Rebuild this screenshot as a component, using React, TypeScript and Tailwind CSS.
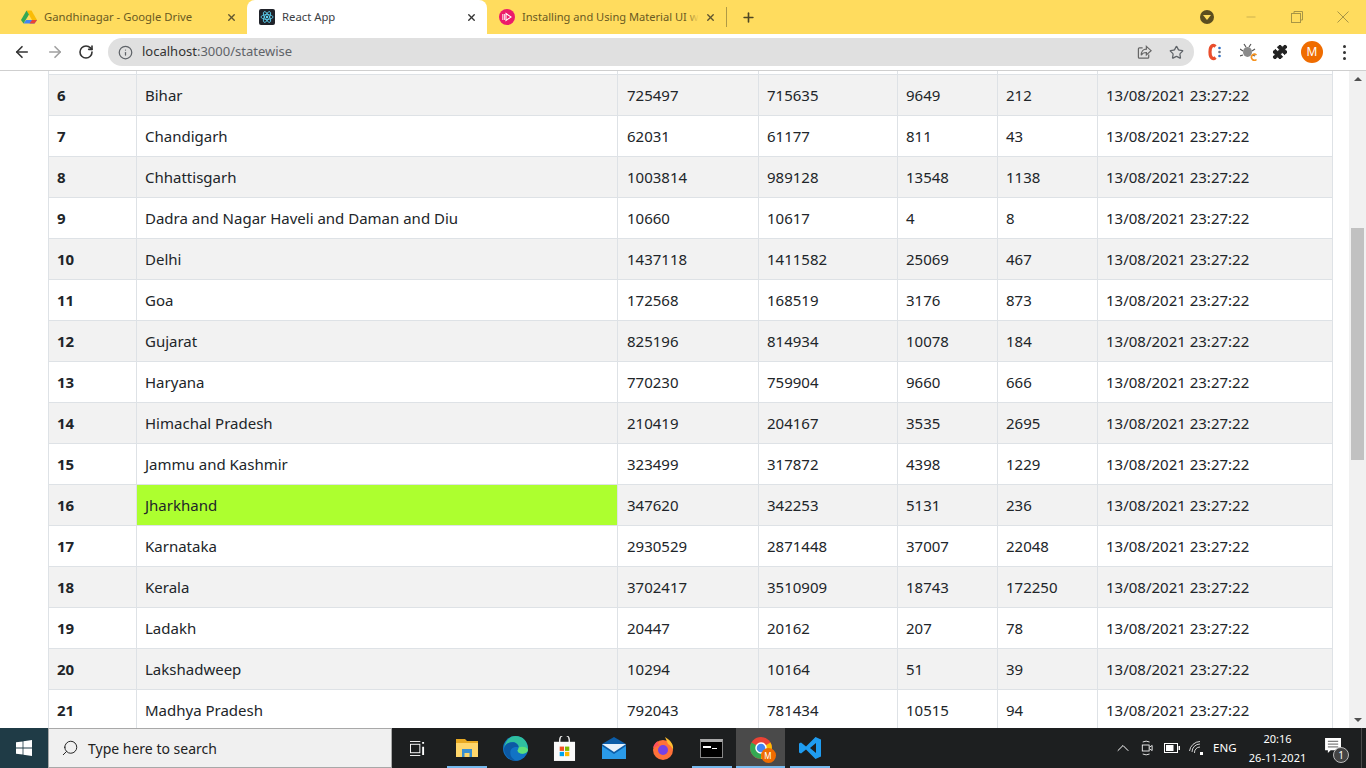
import { ArrowLeft, ArrowRight, RotateCw, Info, Star, Puzzle, Plus, X, Minus, Search, ChevronUp } from 'lucide-react';

const rows = [
  [6, 'Bihar', '725497', '715635', '9649', '212'],
  [7, 'Chandigarh', '62031', '61177', '811', '43'],
  [8, 'Chhattisgarh', '1003814', '989128', '13548', '1138'],
  [9, 'Dadra and Nagar Haveli and Daman and Diu', '10660', '10617', '4', '8'],
  [10, 'Delhi', '1437118', '1411582', '25069', '467'],
  [11, 'Goa', '172568', '168519', '3176', '873'],
  [12, 'Gujarat', '825196', '814934', '10078', '184'],
  [13, 'Haryana', '770230', '759904', '9660', '666'],
  [14, 'Himachal Pradesh', '210419', '204167', '3535', '2695'],
  [15, 'Jammu and Kashmir', '323499', '317872', '4398', '1229'],
  [16, 'Jharkhand', '347620', '342253', '5131', '236'],
  [17, 'Karnataka', '2930529', '2871448', '37007', '22048'],
  [18, 'Kerala', '3702417', '3510909', '18743', '172250'],
  [19, 'Ladakh', '20447', '20162', '207', '78'],
  [20, 'Lakshadweep', '10294', '10164', '51', '39'],
  [21, 'Madhya Pradesh', '792043', '781434', '10515', '94'],
];

const cell = 'border border-[#dee2e6] pr-1 pt-[2px] align-middle';

function Tab({ active, icon, title, width, fade }: { active?: boolean; icon: React.ReactNode; title: string; width: string; fade?: boolean }) {
  return (
    <div className={`${width} h-[34px] flex items-center shrink-0 pl-[12px] ${active ? 'bg-white rounded-t-lg' : ''}`}>
      <div className="w-4 h-4 shrink-0">{icon}</div>
      <div className="relative ml-[7px] flex-1 min-w-0 overflow-hidden">
        <div className={`${fade ? 'text-[11.1px]' : 'text-[11.3px]'} whitespace-nowrap ${active ? 'text-[#3c4043]' : 'text-[#6a5a22]'}`}>{title}</div>
        {fade && <div className="absolute right-0 top-0 bottom-0 w-[14px] bg-gradient-to-r from-transparent to-[#ffdc5e]" />}
      </div>
      <X className={`w-[11px] h-[11px] ml-[6px] mr-[10px] shrink-0 ${active ? 'text-[#333]' : 'text-[#5f5530]'}`} strokeWidth={3} />
    </div>
  );
}

function DriveIcon() {
  return (
    <svg viewBox="0 0 16 16" className="w-4 h-4">
      <path d="M5.500 1.500h5L16 11h-5z" fill="#fbbc04" />
      <path d="M5.500 1.500 0 11l2.500 3.500L8 5.500z" fill="#34a853" />
      <path d="M5 11h11l-2.500 3.500h-11z" fill="#4285f4" />
      <path d="M11 11h5l-2.500 3.500h-5z" fill="#ea4335" />
    </svg>
  );
}

function ReactIcon() {
  return (
    <svg viewBox="0 0 16 16" className="w-4 h-4">
      <rect width="16" height="16" rx="2" fill="#20232a" />
      <g fill="none" stroke="#61dafb" strokeWidth="0.8">
        <ellipse cx="8" cy="8" rx="6" ry="2.400" />
        <ellipse cx="8" cy="8" rx="6" ry="2.400" transform="rotate(60 8 8)" />
        <ellipse cx="8" cy="8" rx="6" ry="2.400" transform="rotate(120 8 8)" />
      </g>
      <circle cx="8" cy="8" r="1.200" fill="#61dafb" />
    </svg>
  );
}

function PlayIcon() {
  return (
    <svg viewBox="0 0 16 16" className="w-4 h-4">
      <circle cx="8" cy="8" r="8" fill="#ec1a6b" />
      <path d="M7 4.500 12 8l-5 3.500z" fill="none" stroke="#fff" strokeWidth="1.100" />
      <path d="M3.800 5v6M5.400 5v6" stroke="#fff" strokeWidth="0.9" />
    </svg>
  );
}

function ColorZilla() {
  return (
    <svg viewBox="0 0 18 18" className="w-[18px] h-[18px]">
      <path d="M9.500 3.500C7.500 1.500 4 2 4 9s3.500 7.500 5.500 5.500" fill="none" stroke="#ea4e2d" strokeWidth="3.200" />
      <circle cx="13.500" cy="5" r="1.300" fill="#2f6fc4" />
      <circle cx="13.500" cy="9" r="1.300" fill="#6a7380" />
      <circle cx="13.500" cy="13" r="1.300" fill="#2f6fc4" />
    </svg>
  );
}

function BugIcon() {
  return (
    <svg viewBox="0 0 18 18" className="w-[18px] h-[18px]">
      <ellipse cx="7.500" cy="9" rx="4.500" ry="5" fill="#8a8a8a" />
      <path d="M4 1l2 3M11 1L9 4M0 6l3 2M15 6l-3 2M0 13l3-1M15 13l-3-1" stroke="#555" strokeWidth="1.200" />
      <path d="M16.500 12a3 3 0 1 0 0 4.500" fill="none" stroke="#f6921e" strokeWidth="1.600" />
    </svg>
  );
}

function WindowsLogo() {
  return (
    <svg viewBox="0 0 16 16" className="w-4 h-4" fill="#fff">
      <path d="M0 2.300 6.600 1.400v6.200H0zM7.400 1.300 16 0v7.600H7.400zM0 8.400h6.600v6.200L0 13.700zM7.400 8.400H16V16l-8.600-1.300z" />
    </svg>
  );
}

function TaskApp({ children, running, active }: { children: React.ReactNode; running?: boolean; active?: boolean }) {
  return (
    <div className={`relative w-[49px] h-10 flex items-center justify-center shrink-0 ${active ? 'bg-[#4a4a4a]' : ''}`}>
      {children}
      {running && <div className={`absolute bottom-0 h-[2px] bg-[#76b9ed] ${active ? 'left-0 right-0' : 'left-[5px] right-[4px]'}`} />}
    </div>
  );
}

export default function App() {
  return (
    <div className="w-[1366px] h-[768px] flex flex-col overflow-hidden bg-white font-['Noto_Sans',sans-serif]">
      {/* tab strip */}
      <div className="h-[34px] bg-[#ffdc5e] flex items-center shrink-0">
        <div className="w-[9px] shrink-0" />
        <Tab icon={<DriveIcon />} title="Gandhinagar - Google Drive" width="w-[238px]" />
        <Tab active icon={<ReactIcon />} title="React App" width="w-[240px]" />
        <Tab icon={<PlayIcon />} title="Installing and Using Material UI w" width="w-[239px]" fade />
        <div className="w-px h-5 bg-[#b09a45] shrink-0" />
        <Plus className="ml-[14px] w-[15px] h-[15px] text-[#4f4724]" strokeWidth={2.600} />
        <div className="flex-1" />
        <div className="w-[14px] h-[14px] rounded-full bg-[#5b4d1f] flex items-center justify-center mr-[30px]">
          <div className="w-0 h-0 border-x-[4px] border-x-transparent border-t-[5px] border-t-[#ffdc5e]" />
        </div>
        <Minus className="w-[14px] h-[14px] text-[#a89545] mr-[33px]" strokeWidth={1} />
        <svg viewBox="0 0 12 12" className="w-[12px] h-[12px] mr-[34px]" fill="none" stroke="#a89545">
          <rect x="0.500" y="2.500" width="9" height="9" />
          <path d="M3 2.500V.5h8.500V9H9.500" />
        </svg>
        <svg viewBox="0 0 12 12" className="w-[12px] h-[12px] mr-[17px]" fill="none" stroke="#a89545">
          <path d="M.5.5l11 11M11.500.5l-11 11" />
        </svg>
      </div>

      {/* toolbar */}
      <div className="h-[37px] bg-white border-b border-[#cfcfcf] flex items-start shrink-0 box-border">
        <div className="flex items-center h-[36px]">
          <ArrowLeft className="ml-[13px] w-[18px] h-[18px] text-[#333]" strokeWidth={2.200} />
          <ArrowRight className="ml-[15px] w-[18px] h-[18px] text-[#a0a0a0]" strokeWidth={2.200} />
          <RotateCw className="ml-[14px] w-[16px] h-[16px] text-[#333]" strokeWidth={2.400} />
        </div>
        <div className="ml-[14px] mt-[4px] w-[1086px] h-[28px] rounded-full bg-[#e0e0e0] flex items-center">
          <Info className="ml-[10px] w-[15px] h-[15px] text-[#5f6368]" strokeWidth={2} />
          <span className="ml-[9px] text-[13px] text-[#333]">localhost<span className="text-[#5f6368]">:3000/statewise</span></span>
          <div className="flex-1" />
          <svg viewBox="0 0 16 16" className="w-[15px] h-[15px]" fill="none" stroke="#666" strokeWidth="1.300">
            <path d="M6 3H2.500A1 1 0 0 0 1.500 4v9a1 1 0 0 0 1 1h9a1 1 0 0 0 1-1v-3" />
            <path d="M10 1.500 15 6l-5 4.500V8c-3 0-4.500 1-5.500 3 0-4 2-6.500 5.500-6.500z" />
          </svg>
          <Star className="ml-[17px] mr-[10px] w-[15px] h-[15px] text-[#5f6368]" strokeWidth={2} />
        </div>
        <div className="flex items-center h-[36px]">
          <div className="ml-[12px]"><ColorZilla /></div>
          <div className="ml-[16px]"><BugIcon /></div>
          <Puzzle className="ml-[14px] w-[16px] h-[16px] text-[#222] fill-[#222]" strokeWidth={1.500} />
          <div className="ml-[13px] w-[22px] h-[22px] rounded-full bg-[#ef6c00] flex items-center justify-center text-white text-[12px]">M</div>
          <div className="ml-[20px] flex flex-col gap-[3px]">
            <div className="w-[3px] h-[3px] rounded-full bg-[#333]" />
            <div className="w-[3px] h-[3px] rounded-full bg-[#333]" />
            <div className="w-[3px] h-[3px] rounded-full bg-[#333]" />
          </div>
        </div>
      </div>

      {/* page */}
      <div className="flex-1 min-h-0 flex overflow-hidden">
        <div className="flex-1 min-w-0 overflow-hidden pl-[48px]">
          <table className="w-[1284px] table-fixed border-collapse text-[15px] text-[#212529]">
            <colgroup>
              <col className="w-[88px]" />
              <col className="w-[481px]" />
              <col className="w-[141px]" />
              <col className="w-[139px]" />
              <col className="w-[100px]" />
              <col className="w-[100px]" />
              <col className="w-[235px]" />
            </colgroup>
            <tbody>
              <tr className="h-[3px]">
                {[0, 1, 2, 3, 4, 5, 6].map((i) => (
                  <td key={i} className="border-x border-[#dee2e6] p-0" />
                ))}
              </tr>
              {rows.map((r, idx) => (
                <tr key={r[0]} className={`h-[41px] ${idx % 2 === 0 ? 'bg-[#f2f2f2]' : 'bg-white'}`}>
                  <td className={`${cell} pl-2 font-bold`}>{r[0]}</td>
                  <td className={`${cell} pl-2 ${r[1] === 'Jharkhand' ? 'bg-[#adff2f]' : ''}`}>{r[1]}</td>
                  <td className={`${cell} pl-[9px]`}>{r[2]}</td>
                  <td className={`${cell} pl-2`}>{r[3]}</td>
                  <td className={`${cell} pl-2`}>{r[4]}</td>
                  <td className={`${cell} pl-2`}>{r[5]}</td>
                  <td className={`${cell} pl-2`}>13/08/2021 23:27:22</td>
                </tr>
              ))}
            </tbody>
          </table>
        </div>
        <div className="w-[17px] shrink-0 bg-[#f1f1f1] flex flex-col items-center">
          <div className="mt-[6px] w-0 h-0 border-x-[4px] border-x-transparent border-b-[4px] border-b-[#505050]" />
          <div className="mt-[147px] w-[13px] h-[232px] bg-[#c1c1c1]" />
          <div className="flex-1" />
          <div className="mb-[6px] w-0 h-0 border-x-[4px] border-x-transparent border-t-[4px] border-t-[#505050]" />
        </div>
      </div>

      {/* taskbar */}
      <div className="h-10 bg-[#1d1f20] flex items-center shrink-0 text-white">
        <div className="w-[48px] h-10 bg-[#1f3b46] flex items-center justify-center"><WindowsLogo /></div>
        <div className="w-[344px] h-10 bg-[#f0f0f0] border border-[#a8a8a8] flex items-center box-border">
          <Search className="ml-[12px] w-[18px] h-[18px] text-[#222] -scale-x-100" strokeWidth={1.300} />
          <span className="ml-[9px] text-[14px] text-[#222]">Type here to search</span>
        </div>
        <div className="w-px shrink-0" />
        <TaskApp>
          <svg viewBox="0 0 18 16" className="w-[17px] h-[15px]" fill="none" stroke="#fff">
            <path d="M1 .5h11M1 15.500h11" />
            <rect x="1.500" y="3.500" width="10" height="9" />
            <path d="M15 1v2M15 6v9" strokeWidth="2" />
          </svg>
        </TaskApp>
        <TaskApp running>
          <svg viewBox="0 0 22 18" className="w-[22px] h-[18px]">
            <path d="M0 0h9l2 2h11v16H0z" fill="#e8a922" />
            <path d="M0 4h22v14H0z" fill="#ffd66b" />
            <path d="M6 10h10v8h-2.500v-4h-5v4H6z" fill="#3a8fd0" />
          </svg>
        </TaskApp>
        <TaskApp>
          <svg viewBox="0 0 24 24" className="w-[25px] h-[25px]">
            <circle cx="12" cy="12" r="12" fill="#1173c5" />
            <path d="M12 0c7 0 12 5 12 13 0 2-2 4-5 4-3 0-5-1-5-3 0-1 1-1 1-3 0-3-3-5-6-5-4 0-7 2-8 6C2 5 6 0 12 0z" fill="#2fbf9f" />
            <path d="M24 13c0 2-2 4-5 4-3 0-5-1-5-3 0-1 1-1 1-3 3-1 7-1 9 2z" fill="#5ee07a" />
            <path d="M1 12c1-4 4-6 8-6 3 0 6 2 6 5-3-1-8 0-8 5 0 4 3 7 7 8-7 0-13-5-13-12z" fill="#0c59a4" />
          </svg>
        </TaskApp>
        <TaskApp>
          <svg viewBox="0 0 24 26" className="w-[23px] h-[25px]">
            <path d="M7 7V4a5 5 0 0 1 10 0v3" fill="none" stroke="#e8e8e8" strokeWidth="1.500" />
            <path d="M1 6h22v20H1z" fill="#fafafa" />
            <rect x="7" y="11" width="4.500" height="4.500" fill="#f25022" />
            <rect x="12.500" y="11" width="4.500" height="4.500" fill="#7fba00" />
            <rect x="7" y="16.500" width="4.500" height="4.500" fill="#00a4ef" />
            <rect x="12.500" y="16.500" width="4.500" height="4.500" fill="#ffb900" />
          </svg>
        </TaskApp>
        <TaskApp>
          <svg viewBox="0 0 24 22" className="w-[24px] h-[22px]">
            <path d="M0 7 12 0l12 7v15H0z" fill="#0c5da8" />
            <path d="M0 7h24L12 15z" fill="#e8f2fb" />
            <path d="M0 22V9l12 8 12-8v13z" fill="#2a9ae8" />
          </svg>
        </TaskApp>
        <TaskApp>
          <svg viewBox="0 0 24 24" className="w-[24px] h-[24px]">
            <circle cx="12" cy="14" r="10" fill="#ff7139" />
            <path d="M14 1c5 3 9 7 8 13-1-3-3-5-5-6z" fill="#ffbd30" />
            <path d="M2 12c1-4 3-6 5-7-1 3 1 4 2 4z" fill="#ff4f5e" />
            <circle cx="12" cy="14" r="5" fill="#7542e5" />
          </svg>
        </TaskApp>
        <TaskApp running>
          <div className="w-[23px] h-[19px] bg-black border border-[#888] border-t-[3px] border-t-[#aaa] flex items-start pl-[2px] pt-[1px]">
            <div className="w-[8px] h-[2px] bg-white mt-[3px]" />
            <div className="w-[5px] h-px bg-white mt-[5px] ml-[1px]" />
          </div>
        </TaskApp>
        <TaskApp running active>
          <div className="relative w-[22px] h-[22px]">
            <svg viewBox="0 0 22 22" className="w-[22px] h-[22px]">
              <circle cx="11" cy="11" r="11" fill="#ea4335" />
              <path d="M11 11 1.500 5.500A11 11 0 0 0 11 22z" fill="#34a853" />
              <path d="M11 11 20.500 5.500A11 11 0 0 1 11 22z" fill="#fbbc04" />
              <circle cx="11" cy="11" r="5" fill="#4285f4" stroke="#fff" strokeWidth="1.500" />
            </svg>
            <div className="absolute -right-[4px] -bottom-[4px] w-[15px] h-[15px] rounded-full bg-[#ef6c00] flex items-center justify-center text-[8px] text-white">M</div>
          </div>
        </TaskApp>
        <TaskApp running>
          <svg viewBox="0 0 24 24" className="w-[24px] h-[24px]">
            <path d="M17.500 1 8 10.500 3 6.500 1 7.500v9l2 1 5-4 9.500 9.500 5.500-2.500V3.500zM18 7v10l-6-5z" fill="#1f9cf0" />
          </svg>
        </TaskApp>
        <div className="flex-1" />
        <ChevronUp className="w-5 h-5 mr-[8px]" strokeWidth={1.200} />
        <svg viewBox="0 0 14 18" className="w-[12px] h-[16px] mr-[11px]" fill="none" stroke="#fff">
          <path d="M2 2q4-2 8 0M2 16q4 2 8 0" />
          <rect x="1.500" y="5.500" width="8" height="7" />
          <path d="M10 8l3-2v6l-3-2" />
        </svg>
        <svg viewBox="0 0 16 10" className="w-[16px] h-[10px] mr-[9px]">
          <rect x="0.500" y="0.500" width="13" height="9" fill="none" stroke="#fff" />
          <rect x="2" y="2" width="7.500" height="6" fill="#fff" />
          <rect x="14.500" y="3" width="1.500" height="4" fill="#fff" />
        </svg>
        <svg viewBox="0 0 14 14" className="w-[14px] h-[14px] mr-[10px]" fill="none" stroke="#fff">
          <path d="M.5 10A11 11 0 0 1 11 .5M3 11a8 8 0 0 1 8-8M5.500 12a5.500 5.500 0 0 1 5.500-6" opacity="0.8" />
          <path d="M11 11h3v3h-3z" fill="#fff" stroke="none" />
        </svg>
        <span className="text-[11.500px] w-[23px] whitespace-nowrap mr-[13px]">ENG</span>
        <div className="w-[57px] flex flex-col items-center text-[11px] leading-[19px] mr-[19px] whitespace-nowrap">
          <span>20:16</span>
          <span>26-11-2021</span>
        </div>
        <div className="relative w-[17px] h-[15px] -mt-[5px] mr-[19px]">
          <svg viewBox="0 0 18 16" className="w-[17px] h-[15px]">
            <path d="M0 0h17v13H6l-3 3v-3H0z" fill="#fff" />
            <path d="M3 3.500h11M3 6.500h11M3 9.500h11" stroke="#555" />
          </svg>
          <div className="absolute -right-[7px] -bottom-[10px] w-[16px] h-[16px] rounded-full bg-[#444] border border-[#bbb] flex items-center justify-center text-[10px]">1</div>
        </div>
        <div className="w-px h-10 bg-[#4a4a4a] mr-[4px]" />
      </div>
    </div>
  );
}
